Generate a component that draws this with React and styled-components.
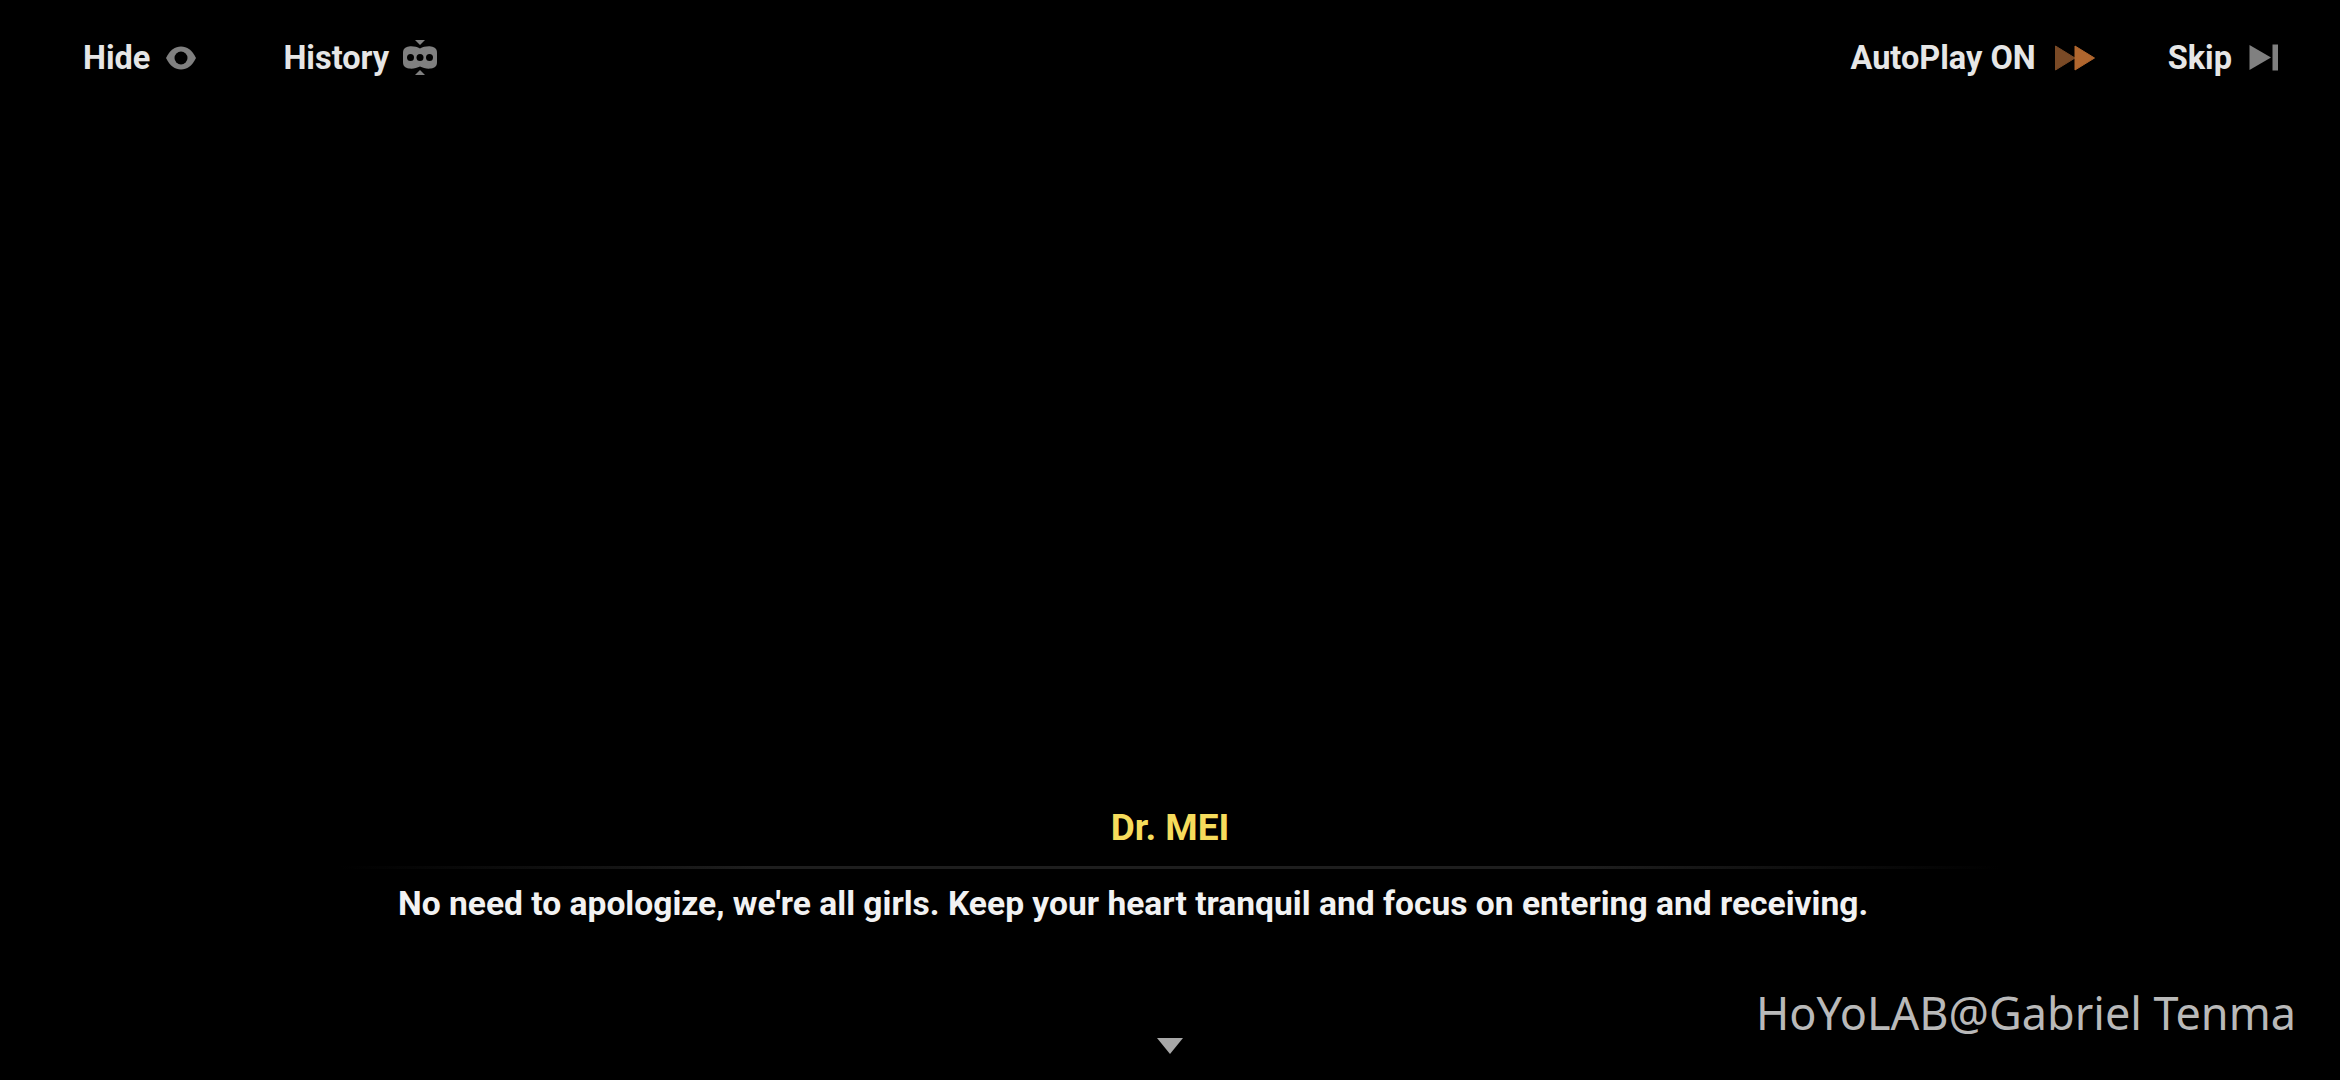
import React from 'react';
import styled, { createGlobalStyle } from 'styled-components';

const GlobalStyle = createGlobalStyle`
    html, body {
        margin: 0;
        padding: 0;
        background: #000;
    }
`;

const Screen = styled.div`
    position: relative;
    width: 2340px;
    height: 1080px;
    display: flex;
    flex-direction: column;
    background: #000;
    overflow: hidden;
    font-family: Roboto, "Liberation Sans", sans-serif;
`;

const TopBar = styled.div`
    display: flex;
    justify-content: space-between;
    align-items: center;
    height: 115px;
    padding: 0 61px 0 83px;
`;

const Group = styled.div`
    display: flex;
    align-items: center;
    gap: ${props => props.$gap}px;
`;

const BarButton = styled.div`
    display: flex;
    align-items: center;
    gap: ${props => props.$gap}px;
    font-size: 32.5px;
    font-weight: 700;
    color: #e6e6e6;
`;

const Dialog = styled.div`
    margin-top: auto;
    display: flex;
    flex-direction: column;
    align-items: center;
`;

const Speaker = styled.div`
    font-size: 37px;
    font-weight: 700;
    line-height: 40px;
    color: #f6dc5c;
`;

const Rule = styled.div`
    width: 1660px;
    height: 3px;
    margin-top: 18px;
    background: linear-gradient(90deg, transparent, #1e1e1e 25%, #1e1e1e 75%, transparent);
`;

const Line = styled.div`
    align-self: flex-start;
    margin: 15px 0 0 398px;
    font-size: 33.6px;
    font-weight: 700;
    line-height: 40px;
    color: #f2f2f2;
    white-space: nowrap;
`;

const NextArrow = styled.div`
    width: 0;
    height: 0;
    margin-top: 114px;
    margin-bottom: 26px;
    border-left: 13px solid transparent;
    border-right: 13px solid transparent;
    border-top: 16px solid #a8a8a8;
`;

const Watermark = styled.div`
    position: absolute;
    right: 44px;
    top: 986px;
    font-family: "Noto Sans", sans-serif;
    font-size: 45px;
    line-height: 54px;
    color: #b9b9b9;
    white-space: nowrap;
`;

const EyeIcon = () => (
    <svg width="30" height="24" viewBox="0 0 30 24">
        <path d="M0 12 C4 4 9 0.500 15 0.500 C21 0.500 26 4 30 12 C26 20 21 23.500 15 23.500 C9 23.500 4 20 0 12 Z" fill="#808080" />
        <circle cx="15" cy="12" r="6.500" fill="#000" />
    </svg>
);

const HistoryIcon = () => (
    <svg width="34" height="35" viewBox="0 0 34 35">
        <path d="M12 0 H22 L17 5 Z" fill="#808080" />
        <path d="M12 35 H22 L17 30 Z" fill="#808080" />
        <path d="M6 6.500 C10 6 14 7 17 8.500 C20 7 24 6 28 6.500 C32 7 34 9 34 13 V22 C34 26 32 28 28 28.500 C24 29 20 28 17 26.500 C14 28 10 29 6 28.500 C2 28 0 26 0 22 V13 C0 9 2 7 6 6.500 Z" fill="#808080" />
        <circle cx="7.500" cy="17.500" r="3.500" fill="#000" />
        <circle cx="17" cy="17.500" r="3.500" fill="#000" />
        <circle cx="26.500" cy="17.500" r="3.500" fill="#000" />
    </svg>
);

const AutoPlayIcon = () => (
    <svg width="40" height="26" viewBox="0 0 40 26">
        <path d="M0.500 1 L20 13 L0.500 25 Z" fill="#7a4a26" stroke="#7a4a26" strokeLinejoin="round" />
        <path d="M20 1 L39.500 13 L20 25 Z" fill="#b0662e" stroke="#b0662e" strokeLinejoin="round" />
    </svg>
);

const SkipIcon = () => (
    <svg width="30" height="27" viewBox="0 0 30 27">
        <path d="M0.500 1 L22 13.500 L0.500 26 Z" fill="#808080" />
        <rect x="23.500" y="0.500" width="5.500" height="26" fill="#808080" />
    </svg>
);

function App() {
    return (
        <Screen>
            <GlobalStyle />
            <TopBar>
                <Group $gap={87}>
                    <BarButton $gap={16}>Hide <EyeIcon /></BarButton>
                    <BarButton $gap={14}>History <HistoryIcon /></BarButton>
                </Group>
                <Group $gap={73}>
                    <BarButton $gap={19}>AutoPlay ON <AutoPlayIcon /></BarButton>
                    <BarButton $gap={17}>Skip <SkipIcon /></BarButton>
                </Group>
            </TopBar>
            <Dialog>
                <Speaker>Dr. MEI</Speaker>
                <Rule />
                <Line>No need to apologize, we're all girls. Keep your heart tranquil and focus on entering and receiving.</Line>
                <NextArrow />
            </Dialog>
            <Watermark>HoYoLAB@Gabriel Tenma</Watermark>
        </Screen>
    );
}

export default App;
